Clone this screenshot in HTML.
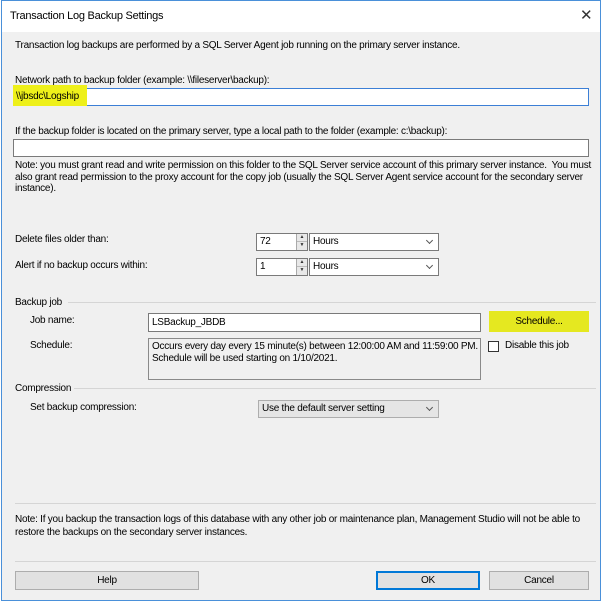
<!DOCTYPE html>
<html><head><style>
*{box-sizing:border-box;margin:0;padding:0}
body{width:602px;height:602px;background:#fff;position:relative;overflow:hidden;font-family:"Liberation Sans",Arial,sans-serif;font-size:10px;letter-spacing:-0.25px;color:#000}
.a{position:absolute;white-space:nowrap}
.win{position:absolute;left:1px;top:0;width:600px;height:601px;border:1px solid #4a90d9;background:#f0f0f0}
.title{position:absolute;left:0;top:0;width:598px;height:31px;background:#fff}
.in{position:absolute;background:#fff;border:1px solid #7a7a7a}
.gl{position:absolute;height:1px;background:#d5d5d5}
.btn{position:absolute;background:#e1e1e1;border:1px solid #adadad;text-align:center;line-height:17px}
.dd{position:absolute;background:#fff;border:1px solid #7a7a7a;padding-left:3px;line-height:16px}
.dd:after{content:"";position:absolute;right:6px;top:4px;width:4px;height:4px;border-right:1px solid #555;border-bottom:1px solid #555;transform:rotate(45deg)}
.sp{position:absolute;background:#e8e8e8;border-left:1px solid #aaa;right:0;top:0;width:11px;height:100%;font-size:5px;line-height:7px;text-align:center;color:#333;letter-spacing:0}
.sp i{display:block;font-style:normal;height:8px;border-bottom:1px solid #bbb}
</style></head><body>
<div class="win">
<div class="title"></div>
</div>
<div class="a" style="left:10px;top:10px;font-size:11px">Transaction Log Backup Settings</div>
<div class="a" style="left:580px;top:6px;font-size:15px;color:#333">✕</div>
<div class="a" style="left:15px;top:40px">Transaction log backups are performed by a SQL Server Agent job running on the primary server instance.</div>
<div class="a" style="left:15px;top:75px">Network path to backup folder (example: \\fileserver\backup):</div>
<div class="in" style="left:13px;top:88px;width:576px;height:18px;border-color:#3c7fd6"></div>
<div class="a" style="left:13px;top:85px;width:74px;height:21px;background:#eef01a"></div>
<div class="a" style="left:16px;top:91px">\\jbsdc\Logship</div>
<div class="a" style="left:15px;top:126px">If the backup folder is located on the primary server, type a local path to the folder (example: c:\backup):</div>
<div class="in" style="left:13px;top:139px;width:576px;height:18px"></div>
<div class="a" style="left:15px;top:160px;line-height:11.5px">Note: you must grant read and write permission on this folder to the SQL Server service account of this primary server instance.&nbsp; You must<br>also grant read permission to the proxy account for the copy job (usually the SQL Server Agent service account for the secondary server<br>instance).</div>
<div class="a" style="left:15px;top:234px">Delete files older than:</div>
<div class="in" style="left:256px;top:233px;width:52px;height:18px;padding:2px 3px">72<div class="sp"><i>▲</i>▼</div></div>
<div class="dd" style="left:309px;top:233px;width:130px;height:18px">Hours</div>
<div class="a" style="left:15px;top:260px">Alert if no backup occurs within:</div>
<div class="in" style="left:256px;top:258px;width:52px;height:18px;padding:2px 3px">1<div class="sp"><i>▲</i>▼</div></div>
<div class="dd" style="left:309px;top:258px;width:130px;height:18px">Hours</div>
<div class="a" style="left:15px;top:297px">Backup job</div>
<div class="gl" style="left:68px;top:302px;width:528px"></div>
<div class="a" style="left:30px;top:315px">Job name:</div>
<div class="in" style="left:148px;top:313px;width:333px;height:19px;padding:3px 3px">LSBackup_JBDB</div>
<div class="btn" style="left:489px;top:311px;width:100px;height:21px;background:#e5e820;border-color:#e5e820;line-height:20px">Schedule...</div>
<div class="a" style="left:30px;top:340px">Schedule:</div>
<div class="in" style="left:148px;top:338px;width:333px;height:42px;background:#f0f0f0;border-color:#8a8a8a;padding:2px 3px;line-height:12px;white-space:nowrap">Occurs every day every 15 minute(s) between 12:00:00 AM and 11:59:00 PM.<br>Schedule will be used starting on 1/10/2021.</div>
<div class="in" style="left:488px;top:341px;width:11px;height:11px;border-color:#333"></div>
<div class="a" style="left:505px;top:340px">Disable this job</div>
<div class="a" style="left:15px;top:383px">Compression</div>
<div class="gl" style="left:74px;top:388px;width:522px"></div>
<div class="a" style="left:30px;top:402px">Set backup compression:</div>
<div class="dd" style="left:258px;top:400px;width:181px;height:18px;background:#e5e5e5;border-color:#adadad">Use the default server setting</div>
<div class="gl" style="left:15px;top:503px;width:581px"></div>
<div class="a" style="left:15px;top:513px;line-height:13px">Note: If you backup the transaction logs of this database with any other job or maintenance plan, Management Studio will not be able to<br>restore the backups on the secondary server instances.</div>
<div class="gl" style="left:15px;top:561px;width:581px"></div>
<div class="btn" style="left:15px;top:571px;width:184px;height:19px">Help</div>
<div class="btn" style="left:376px;top:571px;width:104px;height:19px;border:2px solid #0078d7;line-height:15px">OK</div>
<div class="btn" style="left:489px;top:571px;width:100px;height:19px">Cancel</div>
</body></html>
